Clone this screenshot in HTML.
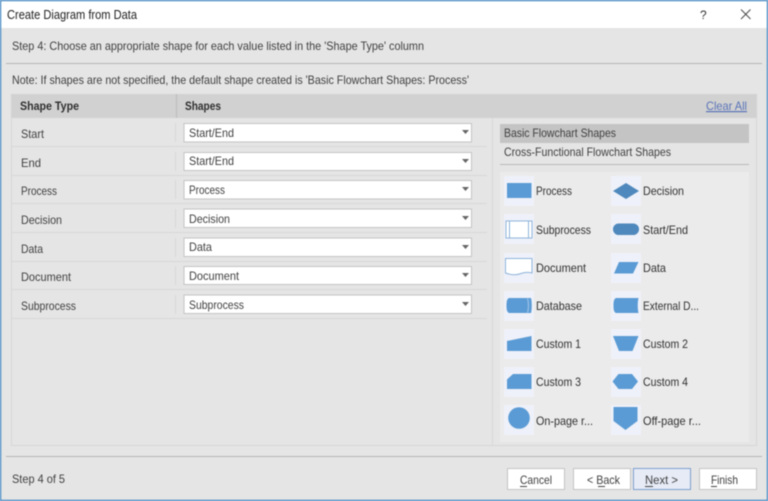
<!DOCTYPE html>
<html><head><meta charset="utf-8"><style>
html,body{margin:0;padding:0;background:#e5e5e5;overflow:hidden}
svg{display:block;filter:blur(.4px)}
text{font-family:"Liberation Sans",sans-serif;font-size:12px;fill:#3f3f3f}
.b{font-weight:bold;fill:#2f2f2f}
.g{fill:#5b9bd5}
.d{fill:#4f88bc}
.o{fill:#fff;stroke:#8fb4da;stroke-width:1}
.t{fill:#eef1f9}
.l{fill:#303030}
</style></head><body>
<svg width="768" height="501" viewBox="0 0 768 501" xmlns="http://www.w3.org/2000/svg">
<rect width="768" height="501" fill="#e5e5e5"/>
<rect x="1" y="1" width="766" height="27" fill="#fff"/>
<rect x=".5" y=".5" width="767" height="500" fill="none" stroke="#3f86c4" stroke-width="1.400"/>
<text x="7" y="19" textLength="130" lengthAdjust="spacingAndGlyphs" style="font-size:12.500px;fill:#222">Create Diagram from Data</text>
<text x="700" y="19" style="font-size:12px;fill:#333">?</text>
<path d="M741 9.500l9.500 9.500M750.500 9.500L741 19" stroke="#444" stroke-width=".9" fill="none"/>
<text x="12" y="50" textLength="412" lengthAdjust="spacingAndGlyphs">Step 4: Choose an appropriate shape for each value listed in the 'Shape Type' column</text>
<rect x="6" y="63" width="756" height="1" fill="#b5b5b5"/>
<text x="12" y="84" textLength="457" lengthAdjust="spacingAndGlyphs">Note: If shapes are not specified, the default shape created is 'Basic Flowchart Shapes: Process'</text>

<rect x="11.500" y="94.500" width="745" height="351" fill="none" stroke="#d6d6d6"/>
<rect x="11" y="94" width="746" height="24" fill="#d1d1d1"/>
<rect x="176" y="94" width="1" height="24" fill="#bdbdbd"/>
<text class="b" x="20" y="110" textLength="59" lengthAdjust="spacingAndGlyphs">Shape Type</text>
<text class="b" x="185" y="110" textLength="36" lengthAdjust="spacingAndGlyphs">Shapes</text>
<text x="706" y="110" textLength="41" lengthAdjust="spacingAndGlyphs" style="fill:#5a74b8" text-decoration="underline">Clear All</text>

<g fill="#d8d8d8">
<rect x="12" y="146" width="475" height="1"/><rect x="12" y="175" width="475" height="1"/><rect x="12" y="203" width="475" height="1"/><rect x="12" y="232" width="475" height="1"/><rect x="12" y="261" width="475" height="1"/><rect x="12" y="289" width="475" height="1"/><rect x="12" y="318" width="475" height="1"/>
<rect x="175" y="123" width="1" height="19"/><rect x="175" y="152" width="1" height="19"/><rect x="175" y="180" width="1" height="19"/><rect x="175" y="209" width="1" height="19"/><rect x="175" y="238" width="1" height="19"/><rect x="175" y="266" width="1" height="19"/><rect x="175" y="295" width="1" height="19"/>
<rect x="492" y="118" width="1" height="327"/>
</g>

<text x="21" y="138" textLength="23" lengthAdjust="spacingAndGlyphs">Start</text>
<text x="21" y="167" textLength="20" lengthAdjust="spacingAndGlyphs">End</text>
<text x="21" y="195" textLength="36" lengthAdjust="spacingAndGlyphs">Process</text>
<text x="21" y="224" textLength="41" lengthAdjust="spacingAndGlyphs">Decision</text>
<text x="21" y="253" textLength="22" lengthAdjust="spacingAndGlyphs">Data</text>
<text x="21" y="281" textLength="50" lengthAdjust="spacingAndGlyphs">Document</text>
<text x="21" y="310" textLength="55" lengthAdjust="spacingAndGlyphs">Subprocess</text>

<g fill="#fff" stroke="#c4c4c4">
<rect x="184" y="123.500" width="287.500" height="18.500"/>
<rect x="184" y="152.500" width="287.500" height="18"/>
<rect x="184" y="180.500" width="287.500" height="18.500"/>
<rect x="184" y="209" width="287.500" height="18.500"/>
<rect x="184" y="238" width="287.500" height="18.500"/>
<rect x="184" y="266.500" width="287.500" height="18"/>
<rect x="184" y="295" width="287.500" height="18.500"/>
</g>
<text x="189" y="137" textLength="45" lengthAdjust="spacingAndGlyphs">Start/End</text>
<text x="189" y="165" textLength="45" lengthAdjust="spacingAndGlyphs">Start/End</text>
<text x="189" y="194" textLength="36" lengthAdjust="spacingAndGlyphs">Process</text>
<text x="189" y="223" textLength="41" lengthAdjust="spacingAndGlyphs">Decision</text>
<text x="189" y="251" textLength="23" lengthAdjust="spacingAndGlyphs">Data</text>
<text x="189" y="280" textLength="50" lengthAdjust="spacingAndGlyphs">Document</text>
<text x="189" y="309" textLength="55" lengthAdjust="spacingAndGlyphs">Subprocess</text>
<g fill="#666">
<path d="M462 130h7l-3.500 4z"/><path d="M462 159h7l-3.500 4z"/><path d="M462 187h7l-3.500 4z"/><path d="M462 216h7l-3.500 4z"/><path d="M462 245h7l-3.500 4z"/><path d="M462 273h7l-3.500 4z"/><path d="M462 302h7l-3.500 4z"/>
</g>

<rect x="500" y="124" width="249" height="19" fill="#c4c4c4"/>
<text x="504" y="137" textLength="112" lengthAdjust="spacingAndGlyphs">Basic Flowchart Shapes</text>
<text x="504" y="156" textLength="167" lengthAdjust="spacingAndGlyphs">Cross-Functional Flowchart Shapes</text>
<rect x="500" y="164" width="249" height="1" fill="#b8b8b8"/>
<rect x="500" y="172" width="249" height="270" fill="#ebebeb"/>

<g>
<rect class="t" x="504" y="176" width="30" height="30"/><rect class="t" x="611" y="176" width="30" height="30"/>
<rect class="t" x="504" y="214" width="30" height="30"/><rect class="t" x="611" y="214" width="30" height="30"/>
<rect class="t" x="504" y="253" width="30" height="30"/><rect class="t" x="611" y="253" width="30" height="30"/>
<rect class="t" x="504" y="291" width="30" height="30"/><rect class="t" x="611" y="291" width="30" height="30"/>
<rect class="t" x="504" y="329" width="30" height="30"/><rect class="t" x="611" y="329" width="30" height="30"/>
<rect class="t" x="504" y="367" width="30" height="30"/><rect class="t" x="611" y="367" width="30" height="30"/>
<rect class="t" x="504" y="405" width="30" height="30"/><rect class="t" x="611" y="405" width="30" height="30"/>
</g>
<!-- shapes -->
<rect class="g" x="507" y="183" width="24.500" height="15"/>
<path class="d" d="M613 191l13-8 13 8-13 8z"/>
<rect class="o" x="506" y="221" width="26" height="17"/><path d="M509.500 221v17M528.500 221v17" stroke="#8fb4da" fill="none"/>
<rect class="d" x="613" y="223.500" width="26" height="11.500" rx="5.700"/>
<path class="o" d="M505.500 258.500h26.500v14.500c-4-1-7-1-11 .5-5 2-10 1.500-15.500-.5z"/>
<path class="g" d="M619 262h19.500l-5.500 11.500h-19z"/>
<path class="g" d="M509 298h22c1 3 1 12 0 15h-22c-2-1-2.500-3-2.500-7.500s.5-6.500 2.500-7.500z"/><path d="M527.500 298.500c1.200 3 1.200 11 0 14" stroke="#a9c8e8" fill="none"/>
<path class="g" d="M616 298h22.500c-1 4-1 11 0 15h-22.500c-2-1-2.500-3-2.500-7.500s.5-6.500 2.500-7.500z"/>
<path class="g" d="M507 341l24.500-5V351H507z"/>
<path class="g" d="M613 336h25.500l-6 15h-13.500z"/>
<path class="g" d="M513 374h18.500v15H507v-9.500z"/>
<path class="g" d="M618.500 374h13.500l6 7.500-6 7.500h-13.500l-6-7.500z"/>
<circle class="g" cx="519" cy="418" r="10.800"/>
<path class="g" d="M613.500 407h24v14l-12 9-12-9z"/>

<g>
<text class="l" x="536" y="195" textLength="36" lengthAdjust="spacingAndGlyphs">Process</text>
<text class="l" x="643" y="195" textLength="41" lengthAdjust="spacingAndGlyphs">Decision</text>
<text class="l" x="536" y="234" textLength="55" lengthAdjust="spacingAndGlyphs">Subprocess</text>
<text class="l" x="643" y="234" textLength="45" lengthAdjust="spacingAndGlyphs">Start/End</text>
<text class="l" x="536" y="272" textLength="50" lengthAdjust="spacingAndGlyphs">Document</text>
<text class="l" x="643" y="272" textLength="23" lengthAdjust="spacingAndGlyphs">Data</text>
<text class="l" x="536" y="310" textLength="46" lengthAdjust="spacingAndGlyphs">Database</text>
<text class="l" x="643" y="310" textLength="56" lengthAdjust="spacingAndGlyphs">External D...</text>
<text class="l" x="536" y="348" textLength="45" lengthAdjust="spacingAndGlyphs">Custom 1</text>
<text class="l" x="643" y="348" textLength="45" lengthAdjust="spacingAndGlyphs">Custom 2</text>
<text class="l" x="536" y="386" textLength="45" lengthAdjust="spacingAndGlyphs">Custom 3</text>
<text class="l" x="643" y="386" textLength="45" lengthAdjust="spacingAndGlyphs">Custom 4</text>
<text class="l" x="536" y="425" textLength="57" lengthAdjust="spacingAndGlyphs">On-page r...</text>
<text class="l" x="643" y="425" textLength="58" lengthAdjust="spacingAndGlyphs">Off-page r...</text>
</g>

<rect x="6" y="456" width="756" height="1" fill="#b5b5b5"/>
<text x="12" y="483" textLength="53" lengthAdjust="spacingAndGlyphs">Step 4 of 5</text>

<g stroke="#c4c4c4" fill="#fff">
<rect x="507.500" y="468.500" width="57" height="21"/>
<rect x="573.500" y="468.500" width="57" height="21"/>
<rect x="699.500" y="468.500" width="57" height="21"/>
</g>
<rect x="633.500" y="468.500" width="57" height="21" fill="#e6ebf6" stroke="#7f9fd0"/>
<text x="520" y="484" textLength="32" lengthAdjust="spacingAndGlyphs">Cancel</text>
<text x="587" y="484" textLength="33" lengthAdjust="spacingAndGlyphs">&lt; Back</text>
<text x="645" y="484" textLength="33" lengthAdjust="spacingAndGlyphs">Next &gt;</text>
<text x="711" y="484" textLength="27" lengthAdjust="spacingAndGlyphs">Finish</text>
<g fill="#444">
<rect x="520" y="486" width="7" height="1"/><rect x="598" y="486" width="7" height="1"/><rect x="645" y="486" width="8" height="1"/><rect x="711" y="486" width="6" height="1"/>
</g>
</svg>
</body></html>
